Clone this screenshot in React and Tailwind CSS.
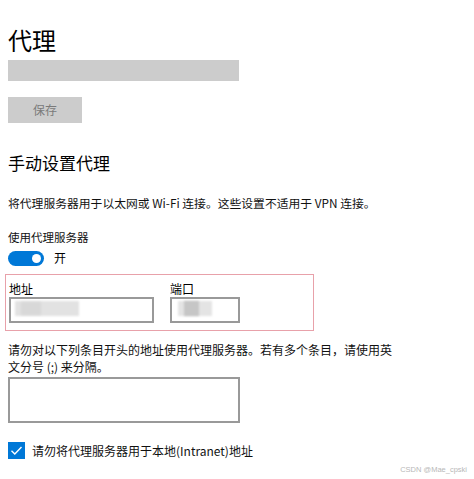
export default function App() {
  const font = { fontFamily: '"Noto Sans CJK SC", "Noto Sans", sans-serif' };
  return (
    <div className="w-[474px] h-[479px] bg-white text-black relative overflow-hidden" style={font}>
      <div className="pl-2 pt-[22px] flex flex-col items-start">
        <div className="text-[24px] leading-[36px]">代理</div>
        <div className="mt-[2px] w-[231px] h-[21px] bg-[#cccccc]" />
        <div className="mt-[16px] w-[74px] h-[26px] bg-[#cccccc] flex items-center justify-center text-[12px] text-[#7a7a7a]">保存</div>
        <div className="mt-[28px] text-[17px] leading-[24px]">手动设置代理</div>
        <div className="mt-[20px] text-[11.8px] leading-[16px] text-[#111]">将代理服务器用于以太网或 Wi-Fi 连接。这些设置不适用于 VPN 连接。</div>
        <div className="mt-[18px] text-[11.5px] leading-[16px] text-[#111]">使用代理服务器</div>
        <div className="mt-[5px] flex items-center">
          <div className="w-[36px] h-[15px] rounded-full bg-[#0078d7] flex items-center justify-end pr-[3px]">
            <div className="w-[9px] h-[9px] rounded-full bg-white" />
          </div>
          <span className="ml-[10px] text-[12px] leading-[16px]">开</span>
        </div>
      </div>
      <div className="ml-[5px] mt-[8px] w-[309px] h-[57px] border border-[#e8a1aa] pl-[3px] pt-[7px] flex gap-[16px]">
        <div className="flex flex-col">
          <div className="text-[12px] leading-[14px]">地址</div>
          <div className="mt-[1px] w-[145px] h-[26px] border-2 border-[#999999] relative">
            <div className="absolute left-[4px] top-[2px] w-[64px] h-[15px] bg-[#e2e2e2] blur-[1px]" />
            <div className="absolute left-[10px] top-[3px] w-[20px] h-[13px] bg-[#d8d8d8] blur-[1px]" />
          </div>
        </div>
        <div className="flex flex-col">
          <div className="text-[12px] leading-[14px]">端口</div>
          <div className="mt-[1px] w-[70px] h-[26px] border-2 border-[#999999] relative">
            <div className="absolute left-[6px] top-[2px] w-[34px] h-[15px] bg-[#e4e4e4] blur-[1px]" />
            <div className="absolute left-[12px] top-[2px] w-[15px] h-[15px] bg-[#c6c6c6] blur-[1px]" />
          </div>
        </div>
      </div>
      <div className="pl-2 flex flex-col items-start">
        <div className="mt-[10px] text-[12px] leading-[17px] text-[#111]">
          请勿对以下列条目开头的地址使用代理服务器。若有多个条目，请使用英<br />文分号 (;) 来分隔。
        </div>
        <div className="mt-[2px] w-[232px] h-[46px] border-2 border-[#999999]" />
        <div className="mt-[19px] flex items-center">
          <div className="w-[17px] h-[17px] bg-[#0078d7] flex items-center justify-center">
            <svg width="13" height="13" viewBox="0 0 13 13" fill="none">
              <path d="M1.5 6.8 L4.8 10 L11.5 3" stroke="white" strokeWidth="1.4" />
            </svg>
          </div>
          <span className="ml-[7px] text-[12px] leading-[16px] text-[#111]">请勿将代理服务器用于本地(Intranet)地址</span>
        </div>
      </div>
      <div className="absolute right-[7px] bottom-[4px] text-[7.5px] leading-[10px] text-[#b8b8b8]" style={{ fontFamily: '"Liberation Sans", sans-serif' }}>CSDN @Mae_cpski</div>
    </div>
  );
}
